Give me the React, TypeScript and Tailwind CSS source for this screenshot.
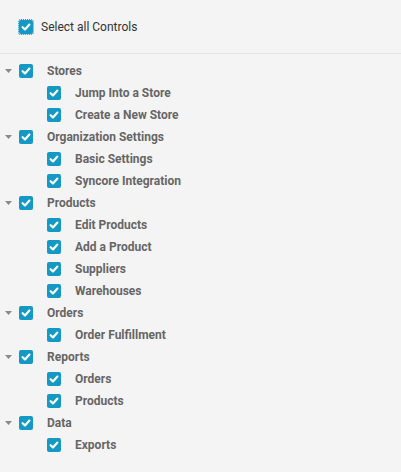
const tree = [
  { label: "Stores", children: ["Jump Into a Store", "Create a New Store"] },
  { label: "Organization Settings", children: ["Basic Settings", "Syncore Integration"] },
  { label: "Products", children: ["Edit Products", "Add a Product", "Suppliers", "Warehouses"] },
  { label: "Orders", children: ["Order Fulfillment"] },
  { label: "Reports", children: ["Orders", "Products"] },
  { label: "Data", children: ["Exports"] },
]

function Check() {
  return (
    <span className="flex h-[14px] w-[14px] shrink-0 items-center justify-center rounded-[2px] bg-[#1399c3]">
      <svg width="10" height="10" viewBox="0 0 10 10" fill="none">
        <path d="M1.6 5.2 L4 7.4 L8.4 2.6" stroke="white" strokeWidth="2.2" strokeLinecap="round" strokeLinejoin="round" />
      </svg>
    </span>
  )
}

function Caret() {
  return (
    <svg width="7" height="4" viewBox="0 0 7 4" className="shrink-0">
      <path d="M0 0 H7 L3.5 4 Z" fill="#8a8a8a" />
    </svg>
  )
}

export default function App() {
  return (
    <div className="h-[472px] w-[401px] bg-[#f4f4f4] font-['Roboto',sans-serif]">
      <div className="flex h-[54px] items-center border-b border-[#e4e4e4] pt-[1px] pl-[19px]">
        <span className="rounded-[2px] outline-1 outline-offset-0 outline-dotted outline-[#1399c3]">
          <Check />
        </span>
        <span className="ml-[8px] text-[12px] text-[#333]">Select all Controls</span>
      </div>
      <div className="pt-[6px]">
        {tree.map((node) => (
          <div key={node.label}>
            <div className="flex h-[22px] items-center">
              <span className="ml-[5px] flex w-[14px] items-center">
                <Caret />
              </span>
              <Check />
              <span className="ml-[14px] text-[12px] font-bold text-[#666]">{node.label}</span>
            </div>
            {node.children.map((c) => (
              <div key={c} className="flex h-[22px] items-center pl-[47px]">
                <Check />
                <span className="ml-[14px] text-[12px] font-bold text-[#666]">{c}</span>
              </div>
            ))}
          </div>
        ))}
      </div>
    </div>
  )
}
